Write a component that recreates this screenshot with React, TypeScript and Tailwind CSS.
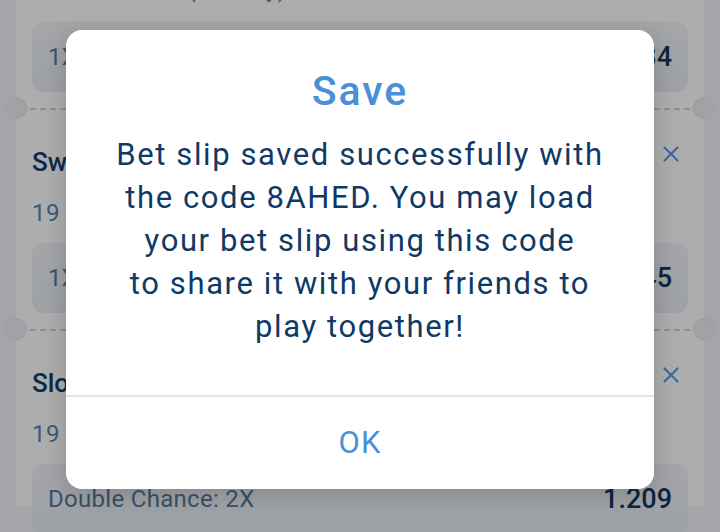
import { X } from "lucide-react";

type Pick = {
  title?: string;
  date: string;
  market: string;
  odds: string;
};

const picks: Pick[] = [
  { date: "19 Feb, 18:30 (Sunday)", market: "1X: Home or Draw", odds: "1.34" },
  { title: "Swansea City - Cardiff City", date: "19 Feb, 16:00 (Sunday)", market: "1X: Home or Draw", odds: "1.45" },
  { title: "Slovan Bratislava - Zilina", date: "19 Feb, 17:00 (Sunday)", market: "Double Chance: 2X", odds: "1.209" },
];

const Separator = () => (
  <div className="relative h-px">
    <div className="mx-[14px] border-t-2 border-dashed border-[#cfd3d9]" />
    <div className="absolute -left-[11px] -top-[11px] h-[22px] w-[22px] rounded-full border border-[#e2e5ea] bg-[#eceff3]" />
    <div className="absolute -right-[11px] -top-[11px] h-[22px] w-[22px] rounded-full border border-[#e2e5ea] bg-[#eceff3]" />
  </div>
);

const PickCard = ({ pick, first }: { pick: Pick; first?: boolean }) => (
  <div className={first ? "-mt-[26px] flex flex-col px-4 pb-4" : "flex flex-col px-4 pb-4 pt-[36px]"}>
    {pick.title && (
      <div className="flex items-start justify-between">
        <div className="h-[34px] text-[26px] font-medium leading-[34px] text-[#103e6d]">{pick.title}</div>
        <X className="-mt-[4px] mr-[4px] h-[26px] w-[26px] text-[#559fe8]" strokeWidth={2} />
      </div>
    )}
    <div className={`${pick.title ? "mt-[19px]" : "mb-[3px]"} h-[30px] text-[24px] leading-[30px] tracking-[0.5px] text-[#5a87b0]`}>
      {pick.date}
    </div>
    <div className="mt-[15px] flex h-[70px] items-center justify-between rounded-[12px] bg-gradient-to-b from-[#f1f4f9] to-[#e9edf3] px-4">
      <span className="text-[24px] tracking-[0.3px] text-[#557a9e]">{pick.market}</span>
      <span className="text-[27px] font-medium text-[#13385e]">{pick.odds}</span>
    </div>
  </div>
);

export default function App() {
  return (
    <div className="relative h-[532px] w-[720px] overflow-hidden bg-[#f2f4f8] px-4 font-[family-name:Roboto,sans-serif]">
      <div className="h-full bg-white">
        {picks.map((p, i) => (
          <div key={i}>
            <PickCard pick={p} first={i === 0} />
            {i < picks.length - 1 && <Separator />}
          </div>
        ))}
      </div>

      {/* dialog */}
      <div className="absolute inset-0 flex items-start justify-center bg-black/[0.32] pt-[30px]">
        <div className="w-[588px] rounded-[16px] bg-white shadow-[0_6px_24px_rgba(0,0,0,0.18)]">
          <h2 className="pt-[37px] text-center text-[41px] font-medium leading-[48px] tracking-[2px] text-[#4a90d9]">
            Save
          </h2>
          <p className="mt-[18px] text-center text-[31px] leading-[43px] tracking-[1.6px] text-[#0f3a66]">
            Bet slip saved successfully with
            <br />
            the code 8AHED. You may load
            <br />
            your bet slip using this code
            <br />
            to share it with your friends to
            <br />
            play together!
          </p>
          <div className="mt-[47px] border-t-2 border-[#e3e3e3]" />
          <button className="flex h-[92px] w-full items-center justify-center text-[31px] tracking-[1px] text-[#4a90d9]">
            OK
          </button>
        </div>
      </div>
    </div>
  );
}
